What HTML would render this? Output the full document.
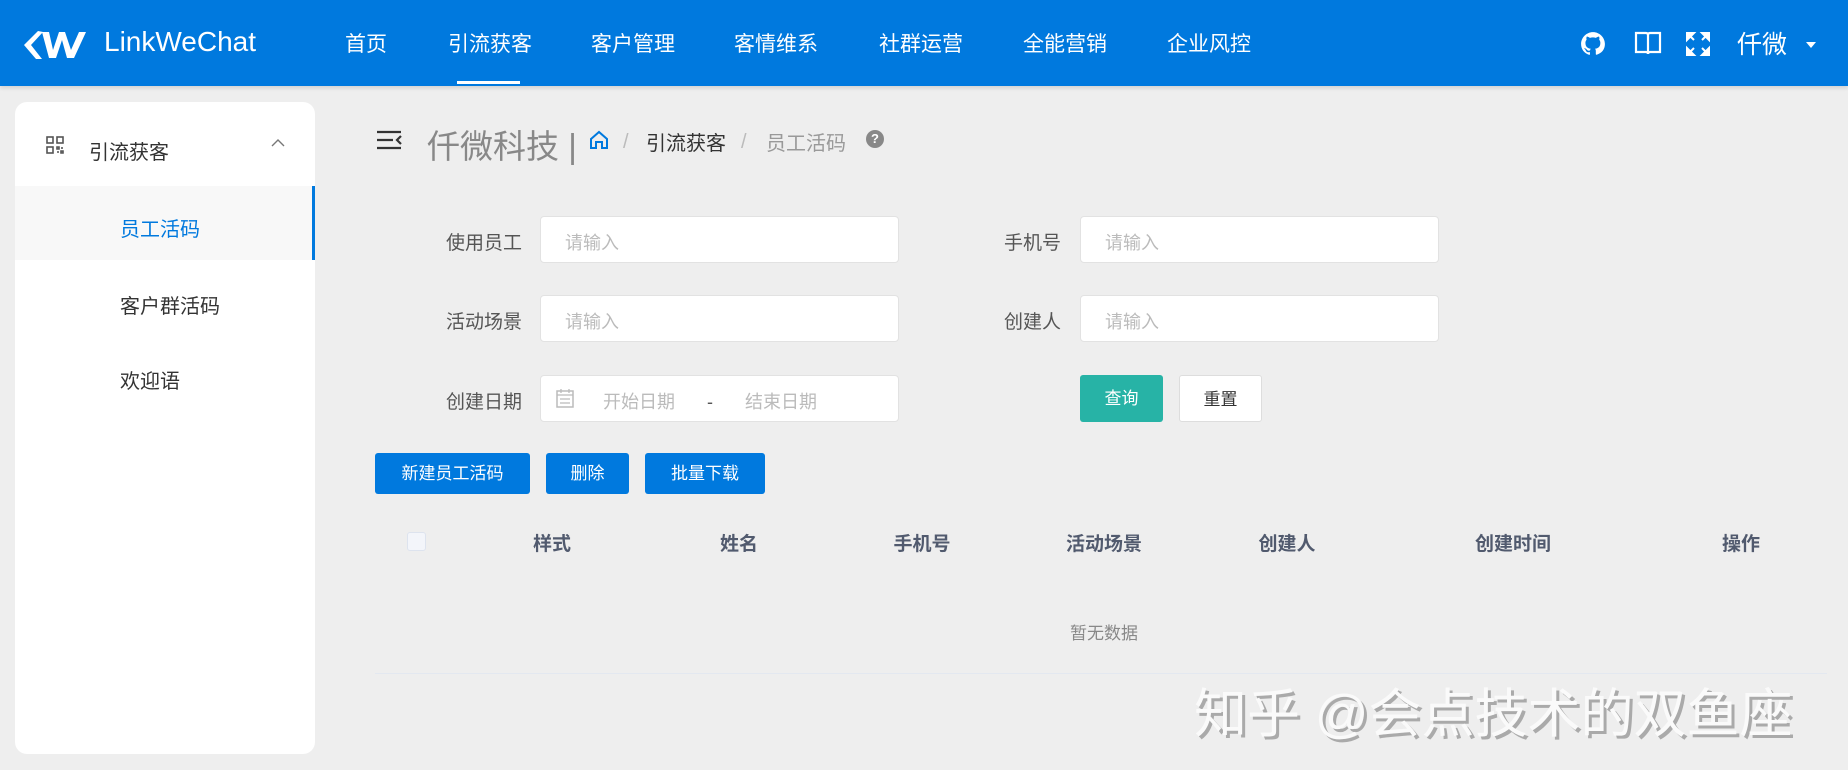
<!DOCTYPE html>
<html><head><meta charset="utf-8">
<style>
*{margin:0;padding:0;box-sizing:border-box}
body{width:1848px;height:770px;overflow:hidden;background:#eeeeee;font-family:"Liberation Sans","Noto Sans CJK SC",sans-serif;position:relative;color:#333}
.abs{position:absolute}
.hdr{left:0;top:0;width:1848px;height:86px;background:#0079de;box-shadow:0 2px 4px rgba(0,0,0,.12)}
.nav{top:28px;font-size:21px;color:#fff;white-space:nowrap}
.side{left:15px;top:102px;width:300px;height:652px;background:#fff;border-radius:12px;overflow:hidden}
.lbl{font-size:19px;color:#555;text-align:right;width:120px}
.inp{background:#fff;border:1px solid #e2e2e2;border-radius:4px;height:47px;font-size:18px;color:#bbb;padding:12px 0 0 24px}
.btn{height:41px;background:#0079de;color:#fff;font-size:17px;border-radius:3px;text-align:center;line-height:41px}
.th{top:529px;font-size:19px;font-weight:bold;color:#515a6e;transform:translateX(-50%);white-space:nowrap}
</style></head><body>
<div class="abs hdr"></div>
<svg class="abs" style="left:22px;top:28px" width="74" height="34" viewBox="0 0 74 34"><path d="M16 3 L2 17 L14 31 L20 31 L9 17 L21 4Z M20 4 L27 30 L34 30 L40 12 L45 30 L52 30 L64 4 L57 4 L49 22 L43 4 L37 4 L31 22 L27 4Z" fill="#fff"/></svg>
<div class="abs" style="left:104px;top:26px;font-size:28px;color:#fff">LinkWeChat</div>
<div class="abs nav" style="left:345px">首页</div>
<div class="abs nav" style="left:448px">引流获客</div>
<div class="abs nav" style="left:591px">客户管理</div>
<div class="abs nav" style="left:734px">客情维系</div>
<div class="abs nav" style="left:879px">社群运营</div>
<div class="abs nav" style="left:1023px">全能营销</div>
<div class="abs nav" style="left:1167px">企业风控</div>
<div class="abs" style="left:457px;top:81px;width:63px;height:3px;background:#fff"></div>
<svg class="abs" style="left:1580px;top:31px" width="26" height="26" viewBox="0 0 24 24"><path d="M12 1C6 1 1 6 1 12c0 5 3 8.5 7.5 10 .5 0 .7-.2.7-.5v-2c-3 .7-3.7-1.300-3.7-1.3-.5-1.2-1.2-1.6-1.2-1.6-1-.7.1-.7.1-.7 1.1.1 1.7 1.1 1.7 1.1 1 1.7 2.6 1.2 3.2.9.1-.7.4-1.2.7-1.5-2.4-.3-5-1.2-5-5.4 0-1.2.4-2.2 1.1-2.9-.1-.3-.5-1.4.1-2.9 0 0 .9-.3 3 1.1a10 10 0 0 1 5.4 0c2.1-1.4 3-1.1 3-1.1.6 1.5.2 2.6.1 2.9.7.8 1.1 1.700 1.1 2.9 0 4.2-2.6 5.1-5 5.4.4.3.8 1 .8 2v3c0 .3.2.6.8.5C20 20.5 23 17 23 12 23 6 18 1 12 1z" fill="#fff"/></svg>
<svg class="abs" style="left:1634px;top:31px" width="28" height="25" viewBox="0 0 28 25"><path d="M2 2 H12 Q14 2 14 4 V23 Q14 21 12 21 H2Z M26 2 H16 Q14 2 14 4 V23 Q14 21 16 21 H26Z" fill="none" stroke="#fff" stroke-width="2.2"/></svg>
<svg class="abs" style="left:1685px;top:31px" width="26" height="26" viewBox="0 0 26 26"><path d="M2 2h7l-7 7z M24 2h-7l7 7z M2 24h7l-7-7z M24 24h-7l7-7z M4 4l5 5 M22 4l-5 5 M4 22l5-5 M22 22l-5-5" fill="#fff" stroke="#fff" stroke-width="2"/></svg>
<div class="abs" style="left:1737px;top:25px;font-size:25px;color:#fff">仟微</div>
<div class="abs" style="left:1806px;top:42px;border:5px solid transparent;border-top:6px solid #fff"></div>

<div class="abs side">
 <svg class="abs" style="left:31px;top:34px" width="18" height="18" viewBox="0 0 18 18" fill="none" stroke="#555" stroke-width="1.6"><rect x="1" y="1" width="6" height="6"/><rect x="11" y="1" width="6" height="6"/><rect x="1" y="11" width="6" height="6"/><path d="M11 11h2v2h-2z M15 15h2v2h-2z M11 16h2 M16 11v2"/></svg>
 <div class="abs" style="left:74px;top:34px;font-size:20px;color:#333">引流获客</div>
 <svg class="abs" style="left:255px;top:36px" width="16" height="10" viewBox="0 0 16 10"><path d="M2 8 L8 2 L14 8" fill="none" stroke="#777" stroke-width="1.4"/></svg>
 <div class="abs" style="left:0;top:84px;width:300px;height:74px;background:#f8f8f8;border-right:3px solid #0079de"></div>
 <div class="abs" style="left:105px;top:111px;font-size:20px;color:#0079de">员工活码</div>
 <div class="abs" style="left:105px;top:188px;font-size:20px;color:#333">客户群活码</div>
 <div class="abs" style="left:105px;top:263px;font-size:20px;color:#333">欢迎语</div>
</div>

<svg class="abs" style="left:377px;top:130px" width="26" height="20" viewBox="0 0 26 20"><path d="M0 2h24 M0 10h16 M0 18h24 M24 6l-4 4 4 4" fill="none" stroke="#333" stroke-width="2.2"/></svg>
<div class="abs" style="left:427px;top:120px;font-size:33px;color:#888;white-space:nowrap">仟微科技 <span style="font-size:34px">|</span></div>
<svg class="abs" style="left:588px;top:129px" width="22" height="22" viewBox="0 0 22 22"><path d="M3 10 L11 3 L19 10 V19 H14 V13 H8 V19 H3Z" fill="none" stroke="#0079de" stroke-width="2"/></svg>
<div class="abs" style="left:623px;top:131px;font-size:20px;color:#bbb">/</div>
<div class="abs" style="left:646px;top:127px;font-size:20px;color:#333">引流获客</div>
<div class="abs" style="left:741px;top:131px;font-size:20px;color:#bbb">/</div>
<div class="abs" style="left:766px;top:127px;font-size:20px;color:#999">员工活码</div>
<div class="abs" style="left:866px;top:130px;width:18px;height:18px;border-radius:50%;background:#888;color:#fff;font-size:13px;font-weight:bold;text-align:center;line-height:18px">?</div>

<div class="abs lbl" style="left:402px;top:228px">使用员工</div>
<div class="abs inp" style="left:540px;top:216px;width:359px">请输入</div>
<div class="abs lbl" style="left:941px;top:228px">手机号</div>
<div class="abs inp" style="left:1080px;top:216px;width:359px">请输入</div>
<div class="abs lbl" style="left:402px;top:307px">活动场景</div>
<div class="abs inp" style="left:540px;top:295px;width:359px">请输入</div>
<div class="abs lbl" style="left:941px;top:307px">创建人</div>
<div class="abs inp" style="left:1080px;top:295px;width:359px">请输入</div>
<div class="abs lbl" style="left:402px;top:387px">创建日期</div>
<div class="abs inp" style="left:540px;top:375px;width:359px;padding-left:62px;white-space:nowrap">开始日期<span style="margin-left:32px;color:#555">-</span><span style="margin-left:32px">结束日期</span></div>
<svg class="abs" style="left:556px;top:388px" width="18" height="20" viewBox="0 0 18 20"><rect x="1" y="3" width="16" height="16" fill="none" stroke="#bbb" stroke-width="1.5"/><path d="M1 7h16 M5 1v4 M13 1v4 M4 11h10 M4 15h10" stroke="#bbb" stroke-width="1.3"/></svg>
<div class="abs btn" style="left:1080px;top:375px;width:83px;height:47px;line-height:47px;background:#27b3a6">查询</div>
<div class="abs btn" style="left:1179px;top:375px;width:83px;height:47px;line-height:47px;background:#fff;color:#333;border:1px solid #ddd">重置</div>

<div class="abs btn" style="left:375px;top:453px;width:155px">新建员工活码</div>
<div class="abs btn" style="left:546px;top:453px;width:83px">删除</div>
<div class="abs btn" style="left:645px;top:453px;width:120px">批量下载</div>

<div class="abs" style="left:407px;top:532px;width:19px;height:19px;border:1px solid #dde3ee;background:#f3f5fa;border-radius:3px"></div>
<div class="abs th" style="left:552px">样式</div>
<div class="abs th" style="left:739px">姓名</div>
<div class="abs th" style="left:922px">手机号</div>
<div class="abs th" style="left:1104px">活动场景</div>
<div class="abs th" style="left:1287px">创建人</div>
<div class="abs th" style="left:1513px">创建时间</div>
<div class="abs th" style="left:1741px">操作</div>
<div class="abs" style="left:1104px;top:619px;transform:translateX(-50%);font-size:17px;color:#888">暂无数据</div>
<div class="abs" style="left:375px;top:673px;width:1452px;height:1px;background:#e3e8f0"></div>

<div class="abs" style="left:1194px;top:672px;font-size:53px;color:#fafafa;white-space:nowrap;text-shadow:3px 3px 0 #aaa">知乎 @会点技术的双鱼座</div>
</body></html>
